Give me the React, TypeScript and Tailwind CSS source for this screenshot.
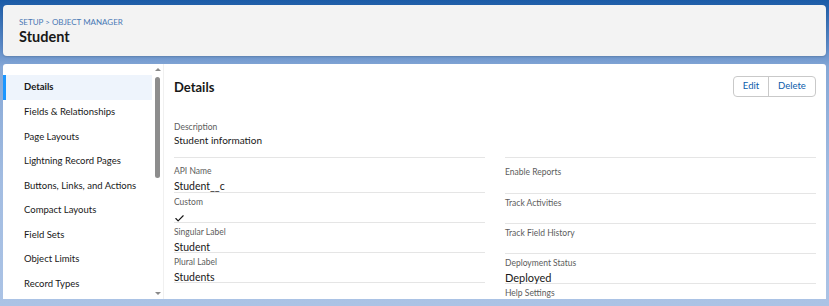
import { Check } from "lucide-react"

const navItems = [
  "Details",
  "Fields & Relationships",
  "Page Layouts",
  "Lightning Record Pages",
  "Buttons, Links, and Actions",
  "Compact Layouts",
  "Field Sets",
  "Object Limits",
  "Record Types",
]

type Field = { label: string; value?: React.ReactNode; big?: boolean }

const leftFields: Field[] = [
  { label: "API Name", value: "Student__c" },
  { label: "Custom", value: <Check size={11} strokeWidth={2.5} className="text-[#181818] mt-[2px]" /> },
  { label: "Singular Label", value: "Student" },
  { label: "Plural Label", value: "Students" },
]

const rightFields: Field[] = [
  { label: "Enable Reports" },
  { label: "Track Activities" },
  { label: "Track Field History" },
  { label: "Deployment Status", value: "Deployed", big: true },
  { label: "Help Settings" },
]

function FieldRow({ f, first }: { f: Field; first?: boolean }) {
  return (
    <div className={`${first ? "h-[36px] pt-[8px]" : "h-[30px] pt-[3px]"} border-b border-[#e5e5e5] shrink-0`}>
      <div className="text-[8.5px] leading-[12px] text-[#5c5c5c]">{f.label}</div>
      <div className={`${f.big ? "text-[11px]" : "text-[10.5px]"} mt-[1px] leading-[16px] text-[#181818] flex items-center h-[16px]`}>
        {f.value}
      </div>
    </div>
  )
}

export default function App() {
  return (
    <div
      className="w-[829px] h-[306px] overflow-hidden bg-[linear-gradient(180deg,#1b5ba7_0%,#5f8cc8_16%,#86a8d6_22%,#a3bde2_60%,#abc3e5_100%)] px-[3px] pt-[5px] flex flex-col"
      style={{ fontFamily: 'Lato, "Noto Sans", sans-serif' }}
    >
      {/* header */}
      <div className="h-[51px] bg-[#f3f3f3] rounded-[4px] px-[16px] pt-[11px] shadow-[0_1px_2px_rgba(0,0,0,0.15)] shrink-0">
        <div className="text-[8px] leading-[12px] text-[#4a78b5]">SETUP &gt; OBJECT MANAGER</div>
        <div className="text-[14.5px] leading-[18px] font-bold text-[#181818]">Student</div>
      </div>

      {/* body */}
      <div className="mt-[8px] h-[235px] bg-white rounded-t-[3px] flex overflow-hidden shrink-0">
        {/* sidebar */}
        <div className="w-[149px] pt-[11px] shrink-0">
          {navItems.map((item, i) => (
            <div
              key={item}
              className={`flex items-center text-[9.5px] text-[#181818] ${
                i === 0
                  ? "h-[25px] bg-[#eef4fc] border-l-[3px] border-[#1b96ff] pl-[18px] font-bold"
                  : "h-[24.5px] pl-[21px]"
              }`}
            >
              {item}
            </div>
          ))}
        </div>

        {/* scrollbar */}
        <div className="w-[11px] shrink-0 flex flex-col items-center bg-white">
          <div className="mt-[4px] w-0 h-0 border-l-[3px] border-r-[3px] border-b-[3px] border-l-transparent border-r-transparent border-b-[#8a8a8a]" />
          <div className="mt-[6px] w-[5px] h-[101px] rounded-full bg-[#8d8d8d]" />
          <div className="flex-1" />
          <div className="mb-[4px] w-0 h-0 border-l-[3px] border-r-[3px] border-t-[3px] border-l-transparent border-r-transparent border-t-[#8a8a8a]" />
        </div>

        {/* main */}
        <div className="flex-1 border-l border-[#f0f0f0] pl-[10px] pr-[10px] pt-[12px]">
          <div className="flex items-start justify-between">
            <div className="text-[13px] font-bold text-[#181818] leading-[20px] mt-[1px]">Details</div>
            <div className="flex border border-[#c9c9c9] rounded-[4px] h-[21px] bg-white">
              <div className="w-[35px] flex items-center justify-center text-[9.5px] text-[#0b5cab] border-r border-[#c9c9c9]">Edit</div>
              <div className="w-[46px] flex items-center justify-center text-[9.5px] text-[#0b5cab]">Delete</div>
            </div>
          </div>

          <div className="mt-[24px] w-[311px] border-b border-[#e5e5e5] pb-[9px]">
            <div className="text-[8.5px] leading-[12px] text-[#5c5c5c]">Description</div>
            <div className="text-[10px] leading-[16px] text-[#181818] -mt-px">Student information</div>
          </div>

          <div className="grid grid-cols-2 gap-x-[20px] -mt-px">
            <div className="flex flex-col">
              {leftFields.map((f, i) => (
                <FieldRow key={f.label} f={f} first={i === 0} />
              ))}
            </div>
            <div className="flex flex-col border-t border-[#e5e5e5]">
              {rightFields.map((f, i) => (
                <FieldRow key={f.label} f={f} first={i === 0} />
              ))}
            </div>
          </div>
        </div>
      </div>
    </div>
  )
}
